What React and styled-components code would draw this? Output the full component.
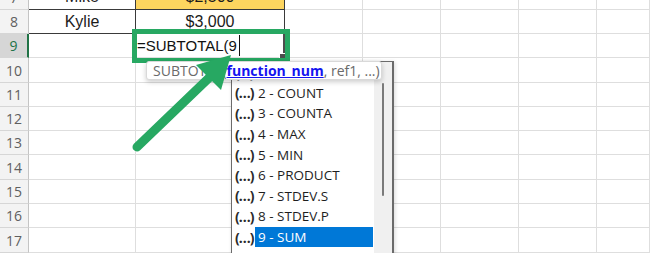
import React from "react";
import styled, { createGlobalStyle, css } from "styled-components";

const GREEN = "#27a862";

const rows = [
  { n: 7, h: 25, b: "Mike", c: "$2,500", table: true, fill: "#fdd55f" },
  { n: 8, h: 24, b: "Kylie", c: "$3,000", table: true },
  { n: 9, h: 24, active: true },
  { n: 10, h: 25 },
  { n: 11, h: 24 },
  { n: 12, h: 24 },
  { n: 13, h: 24 },
  { n: 14, h: 25 },
  { n: 15, h: 24 },
  { n: 16, h: 24 },
  { n: 17, h: 25 },
];

const options = [
  "1 - AVERAGE",
  "2 - COUNT",
  "3 - COUNTA",
  "4 - MAX",
  "5 - MIN",
  "6 - PRODUCT",
  "7 - STDEV.S",
  "8 - STDEV.P",
  "9 - SUM",
  "10 - VAR.S",
];

export default function App() {
  return (
    <>
      <Global />
      <Screen>
        <Sheet>
          {rows.map((r) => (
            <Row key={r.n} $h={r.h}>
              <RowHead $active={r.active}>{r.n}</RowHead>
              <Cell $table={r.table} $center>{r.b}</Cell>
              <Cell $table={r.table} $center $fill={r.fill} $editing={r.active}>
                {r.active ? (
                  <>
                    <Formula>=SUBTOTAL(9</Formula>
                    <Caret />
                    <FillHandle />
                  </>
                ) : (
                  r.c
                )}
              </Cell>
              <Cell />
              <Cell />
              <Cell />
              <Cell />
              <Cell />
            </Row>
          ))}
        </Sheet>

        <FormulaFrame />

        <ListBox>
          <Options>
            {options.map((o, i) => (
              <Option key={o}>
                <FnIcon>(…)</FnIcon>
                <Label $selected={i === 8}>{o}</Label>
              </Option>
            ))}
          </Options>
          <Track>
            <Thumb />
          </Track>
        </ListBox>

        <Tip>
          SUBTOTAL(<Arg>function_num</Arg>, ref1, ...)
        </Tip>

        <Arrow viewBox="0 0 650 253">
          <line x1="137" y1="147" x2="212" y2="75" stroke={GREEN} strokeWidth="9" strokeLinecap="round" />
          <polygon points="231,55 196,65 221,90" fill={GREEN} />
        </Arrow>
      </Screen>
    </>
  );
}

const Global = createGlobalStyle`
  body {
    margin: 0;
    background: #fff;
  }
`;

const Screen = styled.div`
  position: relative;
  width: 650px;
  height: 253px;
  overflow: hidden;
  background: #fff;
  font-family: "Liberation Sans", Arial, sans-serif;
`;

const Sheet = styled.div`
  display: flex;
  flex-direction: column;
  margin-top: -15px;
`;

const Row = styled.div`
  display: grid;
  grid-template-columns: 29px 107px 149px 78px 78px 78px 78px 1fr;
  height: ${(p) => p.$h}px;
`;

const RowHead = styled.div`
  box-sizing: border-box;
  display: flex;
  align-items: center;
  justify-content: center;
  background: ${(p) => (p.$active ? "#d6d6d6" : "#f3f3f3")};
  color: ${(p) => (p.$active ? "#217346" : "#5f5f5f")};
  border-right: ${(p) => (p.$active ? `2px solid #217346` : "1px solid #c4c4c4")};
  border-bottom: 1px solid #d6d6d6;
  font-family: "Open Sans", sans-serif;
  font-size: 14px;
`;

const Cell = styled.div`
  box-sizing: border-box;
  position: relative;
  display: flex;
  align-items: center;
  justify-content: ${(p) => (p.$center ? "center" : "flex-start")};
  border-right: 1px solid #dedede;
  border-bottom: 1px solid #dedede;
  background: ${(p) => p.$fill || "transparent"};
  color: #1b1b1b;
  font-size: 16px;
  white-space: nowrap;
  ${(p) =>
    p.$table &&
    css`
      border-right-color: #3a3a3a;
      border-bottom-color: #3a3a3a;
    `}
  ${(p) =>
    p.$editing &&
    css`
      justify-content: flex-start;
      padding-left: 1px;
      border-right: 2px solid #4d4d4d;
    `}
`;

const Formula = styled.span`
  font-size: 15px;
  color: #111;
`;

const Caret = styled.span`
  width: 1px;
  height: 21px;
  margin-left: 2px;
  background: #111;
`;

const FillHandle = styled.span`
  position: absolute;
  right: -3px;
  bottom: -3px;
  width: 5px;
  height: 5px;
  background: #4d4d4d;
  border: 1px solid #fff;
`;

const FormulaFrame = styled.div`
  position: absolute;
  left: 132px;
  top: 29px;
  width: 158px;
  height: 34px;
  box-sizing: border-box;
  border: 5px solid ${GREEN};
`;

const Tip = styled.div`
  position: absolute;
  left: 146px;
  top: 61px;
  width: 236px;
  height: 19px;
  box-sizing: border-box;
  padding-left: 6px;
  display: flex;
  align-items: center;
  background: #fff;
  border: 1px solid #d9d9d9;
  border-radius: 3px;
  box-shadow: 0 2px 5px rgba(0, 0, 0, 0.2);
  font-family: "Open Sans", sans-serif;
  font-size: 14px;
  color: #6a6a6a;
  white-space: pre;
`;

const Arg = styled.span`
  color: #1414f0;
  font-weight: 700;
  text-decoration: underline;
`;

const ListBox = styled.div`
  position: absolute;
  left: 231px;
  top: 61px;
  width: 163px;
  height: 200px;
  box-sizing: border-box;
  display: flex;
  background: #fff;
  border: 1px solid #6b6b6b;
  border-right-width: 2px;
  box-shadow: 1px 1px 4px rgba(0, 0, 0, 0.15);
  overflow: hidden;
`;

const Options = styled.div`
  flex: 1;
  display: flex;
  flex-direction: column;
  padding-left: 3px;
`;

const Option = styled.div`
  display: flex;
  align-items: center;
  height: 20.6px;
  flex-shrink: 0;
  font-family: "Open Sans", sans-serif;
  font-size: 13.5px;
  color: #1e1e1e;
`;

const FnIcon = styled.span`
  width: 20px;
  font-weight: 700;
  font-size: 14px;
  letter-spacing: -1px;
  color: #2a2a2a;
`;

const Label = styled.span`
  flex: 1;
  height: 100%;
  display: flex;
  align-items: center;
  padding-left: 3px;
  margin-right: 1px;
  background: ${(p) => (p.$selected ? "#0078d7" : "transparent")};
  color: ${(p) => (p.$selected ? "#fff" : "inherit")};
`;

const Track = styled.div`
  width: 18px;
  background: #f0f0f0;
  display: flex;
  justify-content: center;
  padding-top: 21px;
`;

const Thumb = styled.div`
  width: 2px;
  height: 113px;
  border-radius: 1px;
  background: #7a7a7a;
`;

const Arrow = styled.svg`
  position: absolute;
  left: 0;
  top: 0;
  width: 650px;
  height: 253px;
  pointer-events: none;
`;
